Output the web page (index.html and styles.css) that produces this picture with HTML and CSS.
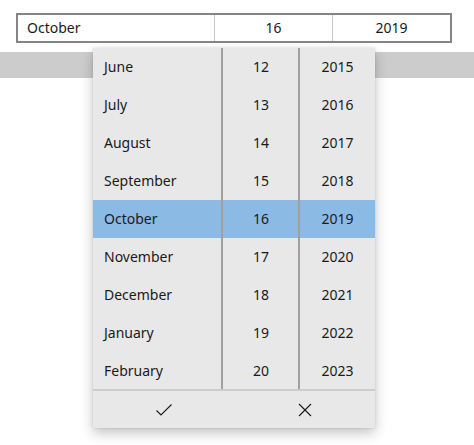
FILE: index.html
```html
<!DOCTYPE html>
<html>
<head>
<meta charset="utf-8">
<link rel="stylesheet" href="styles.css">
</head>
<body>
<div class="page">
  <div class="field">
    <div class="seg seg-month">October</div>
    <div class="seg seg-day">16</div>
    <div class="seg seg-year">2019</div>
  </div>
  <div class="band"></div>
  <div class="flyout">
    <div class="cols">
      <div class="col col-month">
        <div class="item">June</div>
        <div class="item">July</div>
        <div class="item">August</div>
        <div class="item">September</div>
        <div class="item sel">October</div>
        <div class="item">November</div>
        <div class="item">December</div>
        <div class="item">January</div>
        <div class="item">February</div>
      </div>
      <div class="col col-day">
        <div class="item">12</div>
        <div class="item">13</div>
        <div class="item">14</div>
        <div class="item">15</div>
        <div class="item sel">16</div>
        <div class="item">17</div>
        <div class="item">18</div>
        <div class="item">19</div>
        <div class="item">20</div>
      </div>
      <div class="col col-year">
        <div class="item">2015</div>
        <div class="item">2016</div>
        <div class="item">2017</div>
        <div class="item">2018</div>
        <div class="item sel">2019</div>
        <div class="item">2020</div>
        <div class="item">2021</div>
        <div class="item">2022</div>
        <div class="item">2023</div>
      </div>
    </div>
    <div class="actions">
      <div class="btn" aria-label="Accept">
        <svg width="18" height="14" viewBox="0 0 18 14"><path d="M1.5 7.5 L6 12 L16.5 1.5" fill="none" stroke="#1a1a1a" stroke-width="1.1"/></svg>
      </div>
      <div class="btn" aria-label="Dismiss">
        <svg width="14" height="14" viewBox="0 0 14 14"><path d="M1 1 L13 13 M13 1 L1 13" fill="none" stroke="#1a1a1a" stroke-width="1.1"/></svg>
      </div>
    </div>
  </div>
</div>
</body>
</html>
```
FILE: styles.css
```css
html, body {
  margin: 0;
  padding: 0;
  background: #ffffff;
}
body {
  font-family: "Noto Sans", "Open Sans", sans-serif;
  font-size: 14px;
  color: #1a1a1a;
}
.page {
  position: relative;
  width: 474px;
  height: 445px;
  padding-top: 13px;
  box-sizing: border-box;
}
.field {
  margin-left: 16px;
  width: 436px;
  height: 30px;
  box-sizing: border-box;
  border: 2px solid #858585;
  display: flex;
  background: #fff;
}
.seg {
  display: flex;
  align-items: center;
  height: 100%;
  padding-bottom: 2px;
  box-sizing: border-box;
}
.seg-month {
  width: 197px;
  padding-left: 9px;
  border-right: 1px solid #c8c8c8;
}
.seg-day {
  width: 118px;
  justify-content: center;
  border-right: 1px solid #c8c8c8;
}
.seg-year {
  flex: 1;
  justify-content: center;
}
.band {
  margin-top: 9px;
  height: 26px;
  background: #cccccc;
}
.flyout {
  position: absolute;
  left: 93px;
  top: 48px;
  width: 282px;
  height: 380px;
  background: #e8e8e8;
  box-shadow: 0 5px 12px rgba(0,0,0,0.24), 0 0 2px rgba(0,0,0,0.12);
  display: flex;
  flex-direction: column;
}
.cols {
  display: grid;
  grid-template-columns: 129px 77px 76px;
  height: 341px;
}
.col {
  display: flex;
  flex-direction: column;
}
.col-day, .col-year {
  border-left: 2px solid #a0a0a0;
  margin-left: -1px;
}
.col-day .item, .col-year .item {
  justify-content: center;
}
.item {
  height: 38px;
  flex: none;
  display: flex;
  align-items: center;
  padding-bottom: 2px;
  box-sizing: border-box;
}
.col-month .item {
  padding-left: 11px;
}
.item.sel {
  background: #8bbbe4;
}
.actions {
  border-top: 2px solid #cdcdcd;
  flex: 1;
  display: grid;
  grid-template-columns: 1fr 1fr;
}
.btn {
  display: flex;
  align-items: center;
  justify-content: center;
}
```
